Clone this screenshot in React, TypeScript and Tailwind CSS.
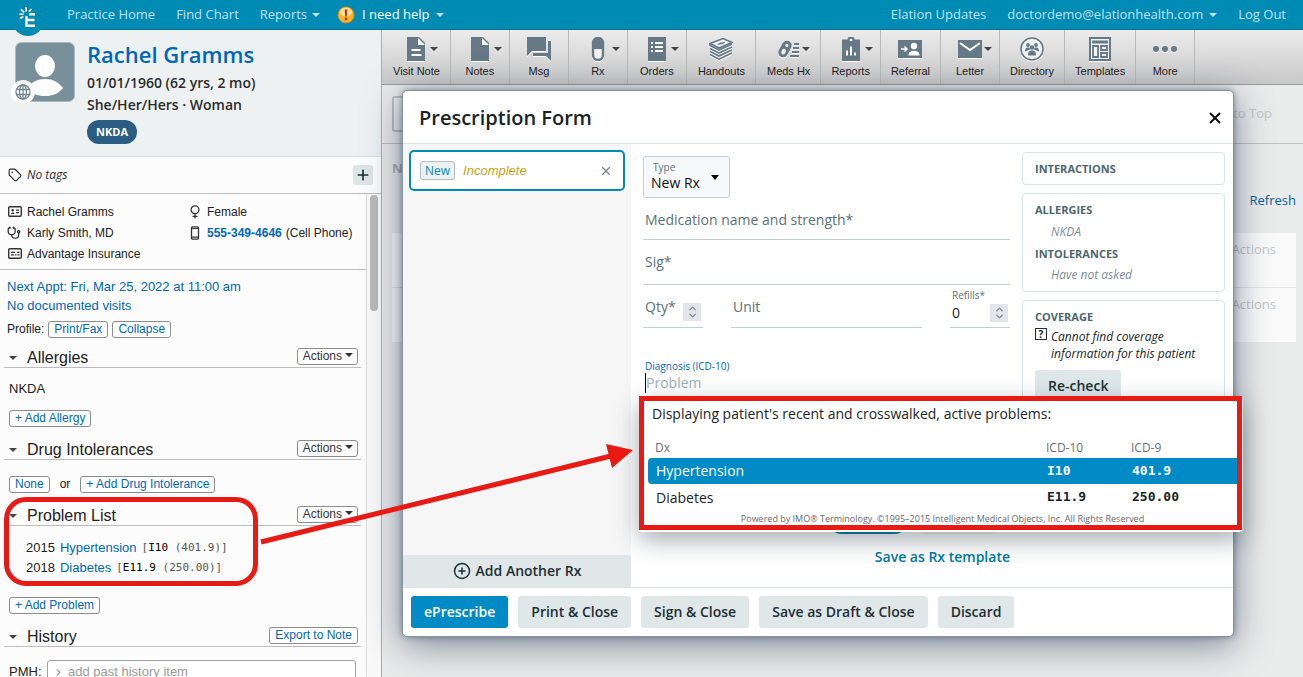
import React from 'react';
import { ChevronDown, ChevronRight, ChevronUp, CirclePlus, Plus, Stethoscope, Tag, X } from 'lucide-react';

// --- Small shared pieces ---
const Caret = ({ className = '' }: { className?: string }) => (
    <svg viewBox="0 0 8 4" className={`h-1 w-2 fill-current ${className}`} aria-hidden="true">
        <path d="M0 0h8L4 4z" />
    </svg>
);

const OutlineButton = ({ children }: { children: React.ReactNode }) => (
    <button className="h-[17px] rounded-[3px] border border-[#8c8c8c] bg-white px-[5px] text-xs leading-[15px] whitespace-nowrap text-[#0067b8]">
        {children}
    </button>
);

const ActionsButton = () => (
    <button className="flex h-[17px] gap-[3px] rounded-[3px] border border-[#8c8c8c] bg-white pr-1 pl-[5px] text-xs leading-[15px] text-[#333]">
        Actions
        <Caret className="mt-1" />
    </button>
);

// --- Top navigation ---
const Logo = () => (
    <a href="#home" aria-label="Home" className="relative z-20 mr-[23px] ml-[12px] block h-9 w-8 self-start rounded-b-full bg-[#008bb5]">
        <svg viewBox="0 0 32 32" className="mt-1 h-8 w-8" fill="none" stroke="#fff" aria-hidden="true">
            <path d="M23 10.200h-6M23 21.800h-8.500v-9.500M15 16h7.500" strokeWidth="2.400" />
            <path d="M7 10.300h4.500M8.800 5.300L12.300 8.300M14.200 3v4.500M19.300 5L17 7.800M8 14.500l3.300-2" strokeWidth="1.600" />
        </svg>
    </a>
);

const TopNav = () => (
    <header className="relative flex h-[30px] shrink-0 items-center border-b border-[#0a6f90] bg-[#008bb5] pr-[17px] font-['Open_Sans',sans-serif] text-[13px] text-[#bfe3ee]">
        <Logo />
        <nav className="flex flex-1 items-center gap-[21px] whitespace-nowrap">
            <a href="#practice">Practice Home</a>
            <a href="#find">Find Chart</a>
            <button className="flex items-center gap-[5px]">
                Reports <Caret />
            </button>
            <button className="-ml-1 flex items-center gap-[7px] font-medium text-white">
                <svg viewBox="0 0 18 18" className="h-[18px] w-[18px]" aria-hidden="true">
                    <circle cx="9" cy="9" r="8" fill="#f9b52c" stroke="#d98a1b" />
                    <ellipse cx="9" cy="6" rx="6" ry="4.500" fill="#fde08a" />
                    <path d="M7.700 3.500h2.600L9.800 10.500H8.200z" fill="#d3271c" />
                    <circle cx="9" cy="13" r="1.400" fill="#d3271c" />
                </svg>
                I need help <Caret className="text-[#bfe3ee]" />
            </button>
            <a href="#updates" className="ml-auto">Elation Updates</a>
            <button className="flex items-center gap-[6px]">
                doctordemo@elationhealth.com <Caret />
            </button>
            <a href="#logout">Log Out</a>
        </nav>
    </header>
);

// --- Toolbar icons, 24px tall ---
const iconFill = '#657987';
const icons = {
    visit: (
        <>
            <path d="M3 0h12l6 6v18H3z" fill={iconFill} />
            <path d="M14 1v7h7z" fill="#fff" />
            <path d="M7.500 13h9M7.500 18h10" stroke="#fff" strokeWidth="2" />
        </>
    ),
    notes: (
        <>
            <path d="M3 0h12l6 6v18H3z" fill={iconFill} />
            <path d="M14 1v7h7z" fill="#fff" />
        </>
    ),
    msg: <path d="M0 0h19v14H5l-5 5zM21 4h3v20l-5-5H6v-3h15z" fill={iconFill} />,
    rx: (
        <>
            <rect x="7" y="1" width="10" height="22" rx="5" fill="#f2f2f2" stroke={iconFill} strokeWidth="2.400" />
            <path d="M7 12V6a5 5 0 0 1 10 0v6z" fill={iconFill} />
        </>
    ),
    orders: (
        <>
            <path d="M3 0h18v24H3z" fill={iconFill} />
            <path d="M6 6h2M6 10h2M6 14h2M10 6h8M10 10h8M10 14h8" stroke="#fff" strokeWidth="2" />
        </>
    ),
    handouts: (
        <g fill="none" stroke={iconFill} strokeWidth="1.600">
            <path d="M1 6.500L14 1.500l9 4-13 5.500z" fill="#f2f2f2" />
            <path d="M10 6l7-1.500-3 2.500-6 1z" fill={iconFill} stroke="none" />
            <path d="M1 6.500v2l9 4.500 13-6M1 11.500l9 4.500 13-6M1 14.500l9 4.500 13-6M1 17.500l9 4.700 13-6.200" />
        </g>
    ),
    meds: (
        <>
            <g transform="rotate(28 8 12)">
                <rect x="4" y="4" width="8" height="16" rx="4" fill={iconFill} stroke={iconFill} strokeWidth="1.600" />
                <rect x="6" y="12" width="4" height="6" rx="2" fill="#eee" />
                <circle cx="8" cy="8" r="1.600" fill="#eee" />
            </g>
            <path d="M17 7h5M16 11h6M15 15h7M13 19h9" stroke={iconFill} strokeWidth="2" />
        </>
    ),
    reports: (
        <>
            <path d="M3 2.500h5.500a3.500 3 0 0 1 7 0H21V24H3z" fill={iconFill} />
            <circle cx="12" cy="3" r="1.300" fill="#fff" />
            <path d="M8 18.500v-5M12 18.500v-9M16 18.500v-3" stroke="#fff" strokeWidth="2" />
        </>
    ),
    referral: (
        <>
            <path d="M0 3h24v18H0z" fill={iconFill} />
            <path d="M3 12h6M6.500 9.500L9 12l-2.500 2.500" stroke="#fff" strokeWidth="1.500" fill="none" />
            <circle cx="16" cy="9" r="3.200" fill="#fff" />
            <path d="M10.500 18.500c0-4 3-4.800 5.500-4.800s5.500.8 5.500 4.800z" fill="#fff" />
        </>
    ),
    letter: (
        <>
            <path d="M0 3h24v18H0z" fill={iconFill} />
            <path d="M2 6l10 7 10-7" stroke="#fff" strokeWidth="2" fill="none" />
        </>
    ),
    directory: (
        <>
            <circle cx="12" cy="12" r="11" fill="#f2f2f2" stroke={iconFill} strokeWidth="1.600" />
            <g fill={iconFill}>
                <circle cx="8" cy="8" r="1.900" />
                <circle cx="16" cy="8" r="1.900" />
                <path d="M5 14.500c0-3 1-4 3-4s2 1 2 2zM19 14.500c0-3-1-4-3-4s-2 1-2 2z" />
                <circle cx="12" cy="10.500" r="2.300" />
                <path d="M8 18.500c0-4 1.500-5 4-5s4 1 4 5z" />
            </g>
        </>
    ),
    templates: (
        <g fill="none" stroke={iconFill}>
            <path d="M2 1h20v22H2z" fill="#f2f2f2" strokeWidth="2" />
            <path d="M4 5h16" strokeWidth="3" />
            <path d="M5 9h5v11H5zM13 9h6v4h-6zM13 16h6v4h-6z" strokeWidth="1.800" />
        </g>
    ),
    more: (
        <g fill={iconFill}>
            <circle cx="3" cy="12" r="3" />
            <circle cx="12" cy="12" r="3" />
            <circle cx="21" cy="12" r="3" />
        </g>
    ),
};

const tools: { label: string; icon: keyof typeof icons; menu?: boolean; wide?: boolean }[] = [
    { label: 'Visit Note', icon: 'visit', menu: true, wide: true },
    { label: 'Notes', icon: 'notes', menu: true },
    { label: 'Msg', icon: 'msg' },
    { label: 'Rx', icon: 'rx', menu: true },
    { label: 'Orders', icon: 'orders', menu: true },
    { label: 'Handouts', icon: 'handouts', wide: true },
    { label: 'Meds Hx', icon: 'meds', menu: true, wide: true },
    { label: 'Reports', icon: 'reports', menu: true },
    { label: 'Referral', icon: 'referral' },
    { label: 'Letter', icon: 'letter', menu: true },
    { label: 'Directory', icon: 'directory' },
    { label: 'Templates', icon: 'templates' },
    { label: 'More', icon: 'more' },
];

const Toolbar = () => (
    <div className="flex h-[55px] border-b border-[#9b9b9b] bg-linear-to-b from-[#ececec] to-[#c8c8c9]">
        {tools.map((tool) => (
            <button
                key={tool.label}
                className={`relative flex min-w-[59px] flex-col items-center border-r border-[#b9b9b9] pt-[7px] pr-[10px] text-[11px] leading-[14px] whitespace-nowrap text-[#222] ${tool.wide ? 'pl-[11px]' : 'pl-[10px]'}`}
            >
                <svg viewBox="0 0 24 24" className="mb-[3px] h-6 w-6 drop-shadow-[0_1px_0_#fff]" aria-hidden="true">
                    {icons[tool.icon]}
                </svg>
                {tool.label}
                {tool.menu && <Caret className="absolute top-[17px] left-1/2 ml-[14px] text-[#444]" />}
            </button>
        ))}
    </div>
);

// --- Patient sidebar ---
const Avatar = () => (
    <div className="relative h-[60px] w-[60px] shrink-0">
        <svg viewBox="0 0 60 60" className="h-[60px] w-[60px]" aria-hidden="true">
            <rect x=".500" y=".500" width="59" height="59" rx="6" fill="#78909a" stroke="#a9bcc0" />
            <ellipse cx="30" cy="24" rx="10" ry="11" fill="#fff" />
            <path d="M12 46c5-6 10-9 18-9s13 3 18 9c-5 6-10 8-18 8s-13-2-18-8z" fill="#fff" />
        </svg>
        <span className="absolute -bottom-[2px] -left-1 flex h-6 w-6 items-center justify-center rounded-full bg-white text-[#6f878f]">
            <svg viewBox="0 0 16 16" className="h-4 w-4" fill="none" stroke="currentColor" strokeWidth="1.300" aria-hidden="true">
                <circle cx="8" cy="8" r="7" />
                <ellipse cx="8" cy="8" rx="3.500" ry="7" />
                <path d="M8 1v14M1.500 5.500h13M1.500 10.500h13" />
            </svg>
        </span>
    </div>
);

const CardIcon = ({ person = false }: { person?: boolean }) => (
    <svg viewBox="0 0 14 11" className="ml-px h-[11px] w-[14px]" aria-hidden="true">
        <rect x=".700" y=".700" width="12.600" height="9.600" rx="1.200" fill="none" stroke="#333" strokeWidth="1.400" />
        {person ? (
            <path d="M3 8c0-2 3.500-2 3.500 0zM4.700 5.600a1.300 1.300 0 1 0 0-2.600 1.300 1.300 0 0 0 0 2.600zM8 3.500h3v1.200H8zM8 6h3v1.200H8z" fill="#333" />
        ) : (
            <path d="M3 3.700h4v1.300H3zM3 6.300h3v1.300H3zM7 6.300h1.500v1.300H7zM9 3.700h2.500v1.300H9zM9.500 6.300h2v1.300h-2z" fill="#333" />
        )}
    </svg>
);

const FemaleIcon = () => (
    <svg viewBox="0 0 12 14" className="ml-[2px] h-[14px] w-3" fill="none" stroke="#333" strokeWidth="1.300" aria-hidden="true">
        <circle cx="6" cy="4.700" r="3.900" />
        <path d="M6 8.600v5M3.500 11.300h5" />
    </svg>
);

const PhoneIcon = () => (
    <svg viewBox="0 0 12 14" className="ml-[2px] h-[14px] w-3" fill="none" stroke="#333" aria-hidden="true">
        <rect x="2.500" y=".800" width="7" height="12.400" rx="1.200" strokeWidth="1.300" />
        <path d="M3 2.500h6M3 11.200h6" strokeWidth="1.200" />
    </svg>
);

const InfoRow = ({ icon, children }: { icon: React.ReactNode; children: React.ReactNode }) => (
    <div className="flex h-[21px] items-center">
        <span className="flex w-[20px]">{icon}</span>
        {children}
    </div>
);

const SectionHead = ({ title, children }: { title: string; children: React.ReactNode }) => (
    <div className="mr-[5px] ml-1 flex h-[21px] items-start border-b border-[#bcbcbc] pt-px pr-[3px]">
        <button className="flex flex-1 items-center text-base leading-5 text-[#222]">
            <Caret className="mr-[10px] ml-[5px] text-[#444]" />
            {title}
        </button>
        <div className="flex">{children}</div>
    </div>
);

const problems = [
    { year: '2015', name: 'Hypertension', icd10: 'I10', icd9: '401.9' },
    { year: '2018', name: 'Diabetes', icd10: 'E11.9', icd9: '250.00' },
];

const Sidebar = () => (
    <aside className="flex w-[382px] shrink-0 flex-col border-r border-[#a9adb0] bg-[#fcfcfc]">
        <div className="flex h-[127px] shrink-0 gap-3 border-b border-[#d5dfe1] bg-[#edf1f2] pt-3 pl-[15px] font-['Open_Sans',sans-serif]">
            <Avatar />
            <div>
                <h1 className="text-[22px] leading-6 font-semibold text-[#0067b8]">Rachel Gramms</h1>
                <p className="pt-[6px] text-sm leading-[22px] font-semibold text-[#2b2b2b]">01/01/1960 (62 yrs, 2 mo)</p>
                <p className="text-sm leading-[22px] font-semibold text-[#2b2b2b]">She/Her/Hers · Woman</p>
                <span className="mt-1 inline-block rounded-full bg-[#2b5d82] px-[9px] text-[11px] leading-6 font-bold text-white">NKDA</span>
            </div>
        </div>
        <div className="flex h-[37px] shrink-0 items-center border-b border-[#bcbcbc] pr-2 pl-2 font-['Open_Sans',sans-serif] text-xs text-[#2b2b2b] italic">
            <Tag size={14} className="mr-[5px]" />
            <span className="flex-1">No tags</span>
            <button aria-label="Add tag" className="flex h-5 w-5 items-center justify-center rounded-[3px] bg-[#dde5e7] text-[#1d2f33]">
                <Plus size={16} strokeWidth={2.5} />
            </button>
        </div>
        <div className="flex min-h-0 flex-1">
            <div className="min-w-0 flex-1 overflow-hidden text-[#222]">
                <div className="flex border-b border-[#bcbcbc] pt-[7px] pb-[5px] pl-[7px] text-xs">
                    <div className="w-[180px]">
                        <InfoRow icon={<CardIcon person />}>Rachel Gramms</InfoRow>
                        <InfoRow icon={<Stethoscope size={14} />}>Karly Smith, MD</InfoRow>
                        <InfoRow icon={<CardIcon />}>Advantage Insurance</InfoRow>
                    </div>
                    <div>
                        <InfoRow icon={<FemaleIcon />}>Female</InfoRow>
                        <InfoRow icon={<PhoneIcon />}>
                            <a href="#call" className="mr-1 font-bold text-[#0067b8]">555-349-4646</a> (Cell Phone)
                        </InfoRow>
                    </div>
                </div>

                <div className="flex flex-col items-start pt-[7px] pl-[7px] text-[13px] leading-[19px] text-[#0067b8]">
                    <a href="#appt">Next Appt: Fri, Mar 25, 2022 at 11:00 am</a>
                    <a href="#visits">No documented visits</a>
                </div>
                <div className="mt-[6px] mb-[9px] flex items-center gap-1 pl-[7px] text-xs leading-[17px]">
                    Profile:
                    <OutlineButton>Print/Fax</OutlineButton>
                    <OutlineButton>Collapse</OutlineButton>
                </div>

                <section className="mb-3">
                    <SectionHead title="Allergies"><ActionsButton /></SectionHead>
                    <div className="pt-3 pl-[9px]">
                        <p className="mb-3 text-[13px] leading-[18px]">NKDA</p>
                        <div className="flex"><OutlineButton>+ Add Allergy</OutlineButton></div>
                    </div>
                </section>

                <section className="mb-3">
                    <SectionHead title="Drug Intolerances"><ActionsButton /></SectionHead>
                    <div className="flex gap-[10px] pt-4 pl-[9px] text-xs leading-[17px]">
                        <OutlineButton>None</OutlineButton>
                        or
                        <OutlineButton>+ Add Drug Intolerance</OutlineButton>
                    </div>
                </section>

                <section className="relative mb-3">
                    <SectionHead title="Problem List"><ActionsButton /></SectionHead>
                    <ul className="mb-[19px] pt-3 pl-[26px] text-[13px] leading-5">
                        {problems.map((p) => (
                            <li key={p.name} className="flex gap-[5px]">
                                <span>{p.year}</span>
                                <a href="#problem" className="text-[#0067b8]">{p.name}</a>
                                <span className="font-['DejaVu_Sans_Mono',monospace] text-[11px] text-[#555]">
                                    [<span className="text-black">{p.icd10}</span> ({p.icd9})]
                                </span>
                            </li>
                        ))}
                    </ul>
                    <div className="flex pl-[9px]"><OutlineButton>+ Add Problem</OutlineButton></div>
                    {/* callout round the list */}
                    <div className="absolute -top-2 left-1 h-[89px] w-[254px] rounded-[22px] border-5 border-[#e81a13]" />
                </section>

                <section>
                    <SectionHead title="History"><OutlineButton>Export to Note</OutlineButton></SectionHead>
                    <div className="mt-[13px] flex pr-[10px] pl-[9px]">
                        <label htmlFor="pmh" className="w-[38px] text-[13px] leading-6">PMH:</label>
                        <div className="flex h-6 flex-1 items-center gap-1 rounded-t-[3px] border border-[#a0a0a0] bg-white pl-[5px]">
                            <ChevronRight size={11} className="text-[#555]" />
                            <input id="pmh" placeholder="add past history item" className="min-w-0 flex-1 text-[13px] outline-none placeholder:text-[#9a9a9a]" />
                        </div>
                    </div>
                </section>
            </div>
            <div className="w-[15px] border-l border-[#dcdcdc] bg-[#f9f9f9] pt-px pl-[3px]">
                <div className="h-[116px] w-2 rounded-full bg-[#b9b9b9]" />
            </div>
        </div>
    </aside>
);

// --- Prescription modal ---
const Spinner = () => (
    <span className="flex h-[18px] w-[18px] shrink-0 flex-col items-center justify-between bg-[#e4e5ea] text-[#84868f]">
        <ChevronUp size={11} strokeWidth={3} className="-mb-1" />
        <ChevronDown size={11} strokeWidth={3} />
    </span>
);

const fieldClass = 'w-full border-b border-[#c0d0d4] pl-[2px] text-sm font-medium text-[#1d2f33] outline-none placeholder:text-[#5b7178]';
const numberClass = 'w-full min-w-0 pl-[2px] text-sm outline-none [appearance:textfield] [&::-webkit-inner-spin-button]:appearance-none placeholder:text-[#5b7178]';

const Popup = () => (
    <div className="absolute top-[37px] -right-[233px] -left-1 z-20 rounded-sm bg-white pr-px pb-[2px] text-[#1a2427] shadow-[0_8px_24px_rgba(30,50,60,0.4)]">
        <div className="border-5 border-[#e81a13] pt-[3px] pl-1">
            <p className="pl-1 text-sm leading-5">Displaying patient's recent and crosswalked, active problems:</p>
            <table className="mt-[14px] w-full table-fixed text-left text-sm">
                <thead>
                    <tr className="text-xs leading-5 text-[#6b6f72]">
                        <th className="pl-[7px] font-normal">Dx</th>
                        <th className="w-[85px] font-normal">ICD-10</th>
                        <th className="w-[106px] font-normal">ICD-9</th>
                    </tr>
                </thead>
                <tbody>
                    {problems.map((p, i) => (
                        <tr key={p.name} className={i === 0 ? 'h-[26px] bg-[#008bc7] text-white' : 'h-[27px]'}>
                            <td className="rounded-l-sm pl-2 font-medium">{p.name}</td>
                            <td className="pl-px font-['DejaVu_Sans_Mono',monospace] text-[13px] font-bold">{p.icd10}</td>
                            <td className="pl-px font-['DejaVu_Sans_Mono',monospace] text-[13px] font-bold">{p.icd9}</td>
                        </tr>
                    ))}
                </tbody>
            </table>
            <p className="pt-[2px] text-center text-[9px] leading-3 text-[#66696b]">
                Powered by IMO® Terminology. ©1995–2015 Intelligent Medical Objects, Inc. All Rights Reserved
            </p>
        </div>
    </div>
);

const RxForm = () => (
    <div className="flex flex-1 flex-col px-3 pt-3">
        <div className="relative h-[42px] w-[87px] rounded-[3px] border border-[#c0d0d4] bg-[#f7f9fb]">
            <label htmlFor="type" className="absolute top-[3px] left-[9px] text-[10px] leading-[14px] font-medium text-[#5b7178]">Type</label>
            <select id="type" className="h-full w-full appearance-none pt-3 pl-[7px] text-sm leading-5 text-[#111]">
                <option>New Rx</option>
            </select>
            <svg viewBox="0 0 8 5" className="absolute top-[18px] right-[10px] h-[5px] w-2" aria-hidden="true">
                <path d="M0 0h8L4 5z" />
            </svg>
        </div>
        <input aria-label="Medication name and strength" placeholder="Medication name and strength*" className={`h-[42px] pt-[2px] ${fieldClass}`} />
        <input aria-label="Sig" placeholder="Sig*" className={`h-[45px] pb-[2px] ${fieldClass}`} />
        <div className="flex gap-7">
            <div className="flex h-[43px] w-[60px] items-center border-b border-[#c0d0d4] pt-[2px] pr-[2px]">
                <input type="number" aria-label="Qty" placeholder="Qty*" className={`font-medium ${numberClass}`} />
                <div className="pt-[10px]"><Spinner /></div>
            </div>
            <div className="flex-1">
                <input aria-label="Unit" placeholder="Unit" className={`h-[43px] ${fieldClass}`} />
            </div>
            <div className="h-[43px] w-[60px] border-b border-[#c0d0d4] pt-[3px] pr-[2px]">
                <label htmlFor="refills" className="block pl-[2px] text-[10px] leading-[14px] font-medium text-[#5b7178]">Refills*</label>
                <div className="flex items-center pt-px">
                    <input id="refills" type="number" defaultValue={0} className={numberClass} />
                    <Spinner />
                </div>
            </div>
        </div>
        <div className="relative mt-[31px] border-b-2 border-[#5b4b8a]">
            <label htmlFor="dx" className="block pl-[2px] text-[10px] leading-[14px] font-medium text-[#0067c0]">Diagnosis (ICD-10)</label>
            <div className="ml-[2px] h-5 border-l border-black">
                <input id="dx" placeholder="Problem" className="block w-full text-sm leading-5 font-medium outline-none placeholder:text-[#9fb0b5]" />
            </div>
            <div className="h-[3px]" />
            <Popup />
        </div>
        {/* bottoms of the toggle pills show from under the popup */}
        <div className="mt-[104px] mr-[7px] flex justify-end">
            <div className="h-8 w-[84px] rounded-full border-2 border-[#0079a8]" />
            <div className="h-8 w-[93px] rounded-full bg-[#f1f3f3]" />
        </div>
        <button className="mt-[13px] self-end text-sm leading-5 font-semibold text-[#0079a8]">Save as Rx template</button>
    </div>
);

const cardClass = 'rounded border border-[#dbe5e7] px-3 leading-[22px]';
const cardTitle = 'text-[11px] font-bold text-[#4d666d]';

const RxInfo = () => (
    <div className="flex w-[203px] flex-col gap-2 pt-2 text-xs">
        <div className={`h-[33px] pt-[5px] ${cardClass}`}>
            <h3 className={cardTitle}>INTERACTIONS</h3>
        </div>
        <div className={`h-[99px] pt-[5px] ${cardClass}`}>
            <h3 className={cardTitle}>ALLERGIES</h3>
            <p className="pl-4 text-[#7a8f95] italic">NKDA</p>
            <h3 className={cardTitle}>INTOLERANCES</h3>
            <p className="-mt-px pl-4 text-[#7a8f95] italic">Have not asked</p>
        </div>
        <div className={`pt-[5px] pb-3 ${cardClass}`}>
            <h3 className={cardTitle}>COVERAGE</h3>
            <div className="flex leading-[17px]">
                <span className="mr-1 h-3 w-3 shrink-0 border border-[#1d2f33] text-center text-[10px] leading-[10px] font-bold">?</span>
                <p className="italic">Cannot find coverage information for this patient</p>
            </div>
            <button className="mt-2 h-8 rounded-[3px] bg-[#dfe7e9] px-[13px] text-sm font-semibold text-[#1d2f33]">Re-check</button>
        </div>
    </div>
);

const footerButtons = ['Print & Close', 'Sign & Close', 'Save as Draft & Close', 'Discard'];

const PrescriptionModal = () => (
    <div
        role="dialog"
        aria-label="Prescription Form"
        className="absolute top-[60px] right-[69px] left-5 z-10 rounded-[5px] border border-[#8493a3] bg-white font-['Open_Sans',sans-serif] text-[#1a2427] shadow-[0_8px_36px_rgba(15,38,66,0.5),0_0_6px_rgba(15,38,66,0.4)]"
    >
        <div className="flex h-[53px] items-center justify-between border-b border-[#dbe3e5] pt-px pr-[9px] pl-4">
            <h2 className="text-xl font-semibold">Prescription Form</h2>
            <button aria-label="Close" className="text-[#111]"><X size={18} strokeWidth={2.5} /></button>
        </div>
        <div className="flex min-h-[443px] pr-2">
            <div className="flex w-[228px] flex-col bg-[#f6f6f6] pt-[6px]">
                <div className="mr-[6px] ml-[6px] flex h-[41px] items-center rounded-[5px] border-2 border-[#008bb5] bg-white pr-[10px] pl-[9px]">
                    <span className="rounded-[3px] border border-[#b0c0c5] bg-[#edf1f2] px-1 text-xs leading-[17px] font-medium text-[#008bb5]">New</span>
                    <em className="flex-1 pl-2 font-['Liberation_Sans',sans-serif] text-[13px] text-[#c9a21a]">Incomplete</em>
                    <button aria-label="Remove" className="text-[#6f858b]"><X size={14} /></button>
                </div>
                <button className="mt-auto flex h-8 items-center justify-center gap-[5px] rounded-[3px] bg-[#dfe7e9] text-sm font-semibold text-[#1d2f33]">
                    <CirclePlus size={18} /> Add Another Rx
                </button>
            </div>
            <RxForm />
            <RxInfo />
        </div>
        <div className="flex gap-[10px] border-t border-[#dbe3e5] p-2 text-sm font-semibold whitespace-nowrap text-[#1d2f33]">
            <button className="h-8 rounded-[3px] bg-[#008bc7] px-[13px] text-white">ePrescribe</button>
            {footerButtons.map((label) => (
                <button key={label} className="h-8 rounded-[3px] bg-[#dfe7e9] px-[13px]">{label}</button>
            ))}
        </div>
    </div>
);

// --- Dimmed page behind the modal ---
const Backdrop = () => (
    <div className="flex flex-1 flex-col bg-[#eaebeb] font-['Open_Sans',sans-serif] text-[13px] text-[#c4c5c6]">
        <div className="flex h-[59px] items-center justify-between border-b border-[#bfc0c1] pr-[31px] pl-[10px]">
            <div className="h-9 w-24 rounded-[3px] border-2 border-[#bcbdbf]" />
            <span>to Top</span>
        </div>
        <div className="pt-[15px] pr-2 pl-[10px] font-bold leading-[18px] text-[#a9abad]">N</div>
        <div className="flex justify-end pt-[14px] pr-[7px] leading-[18px] font-medium">
            <a href="#refresh" className="text-[#00649a]">Refresh</a>
        </div>
        <div className="mt-[24px] mr-[7px] ml-[10px] bg-[#fafafa] text-right">
            <div className="h-[55px] border-b border-[#e4e5e6] pt-[7px] pr-5 leading-[18px]">Actions</div>
            <div className="h-[54px] pt-[7px] pr-5 leading-[18px]">Actions</div>
        </div>
    </div>
);

const Arrow = () => (
    <svg viewBox="0 0 380 110" className="pointer-events-none absolute top-[440px] left-[256px] z-30 h-[110px] w-[380px]" aria-hidden="true">
        <path d="M5 102L355 16" stroke="#e81a13" strokeWidth="5" />
        <path d="M377 10L350 4l6 24z" fill="#e81a13" />
    </svg>
);

export default function App() {
    return (
        <div className="relative flex h-screen flex-col overflow-hidden font-['Liberation_Sans',Arial,sans-serif]">
            <TopNav />
            <div className="flex min-h-0 flex-1">
                <Sidebar />
                <main className="relative flex min-w-0 flex-1 flex-col">
                    <Toolbar />
                    <Backdrop />
                    <PrescriptionModal />
                </main>
            </div>
            <Arrow />
        </div>
    );
}
